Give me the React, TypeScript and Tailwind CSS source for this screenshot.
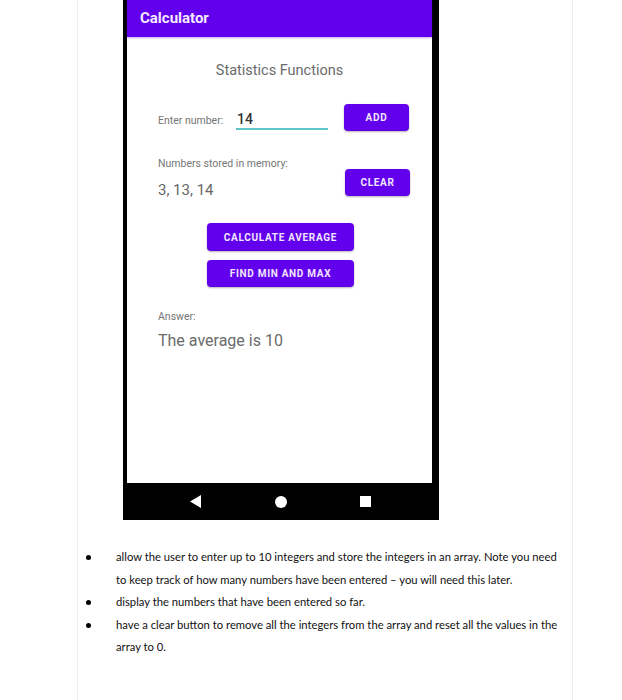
import React from 'react';

const purpleBtn =
  "flex items-center justify-center bg-[#6200ee] text-[#f1e7ff] rounded-[4px] shadow-[0_1px_2px_rgba(0,0,0,0.3)] text-[10px] font-bold tracking-[0.7px] uppercase";

const PhoneScreen: React.FC = () => (
  <div className="flex flex-col w-[305px] h-[483px] bg-white">
    <div className="h-[37px] bg-[#6200ee] flex items-center pl-[13px] shadow-[0_1px_2px_rgba(98,0,238,0.35)]">
      <span className="text-[15px] font-bold text-[#f4ebff] leading-none">Calculator</span>
    </div>

    <div className="mt-[24px] text-center text-[14.5px] leading-[20px] text-[#6b6b6b]">
      Statistics Functions
    </div>

    <div className="mt-[23px] pl-[31px] flex items-start">
      <div className="w-[78px] mt-[10px] text-[10.5px] leading-[14px] text-[#757575]">Enter number:</div>
      <div className="w-[92px] pt-[7px] border-b-2 border-[#5cc6c9]">
        <div className="h-[17px] pl-[1px] text-[14px] leading-[16px] font-medium text-[#333]">14</div>
      </div>
      <button className={`${purpleBtn} ml-[16px] w-[65px] h-[27px]`}>Add</button>
    </div>

    <div className="mt-[26px] pl-[31px] flex items-start">
      <div className="w-[187px]">
        <div className="text-[10.5px] leading-[14px] text-[#757575]">Numbers stored in memory:</div>
        <div className="mt-[9px] text-[15px] leading-[20px] text-[#666]">3, 13, 14</div>
      </div>
      <button className={`${purpleBtn} mt-[12px] w-[65px] h-[27px]`}>Clear</button>
    </div>

    <div className="mt-[23px] flex flex-col items-center gap-[9px] pl-[2px]">
      <button className={`${purpleBtn} w-[147px] h-[28px]`}>Calculate Average</button>
      <button className={`${purpleBtn} w-[147px] h-[27px]`}>Find Min and Max</button>
    </div>

    <div className="mt-[23px] pl-[31px]">
      <div className="text-[10.5px] leading-[14px] text-[#757575]">Answer:</div>
      <div className="mt-[6px] text-[16px] leading-[22px] text-[#6b6b6b]">The average is 10</div>
    </div>
  </div>
);

const NavBar: React.FC = () => (
  <div className="h-[37px] flex items-center pl-[30px]">
    <div className="w-[85px] flex justify-center">
      <svg width="11" height="13" viewBox="0 0 11 13">
        <polygon points="11,0 11,13 0,6.5" fill="#fff" />
      </svg>
    </div>
    <div className="w-[85px] flex justify-center">
      <div className="w-[12px] h-[12px] rounded-full bg-white" />
    </div>
    <div className="w-[85px] flex justify-center">
      <div className="w-[11px] h-[11px] bg-white" />
    </div>
  </div>
);

const bullets: string[][] = [
  [
    'allow the user to enter up to 10 integers and store the integers in an array. Note you need',
    'to keep track of how many numbers have been entered \u2013 you will need this later.',
  ],
  ['display the numbers that have been entered so far.'],
  [
    'have a clear button to remove all the integers from the array and reset all the values in the',
    'array to 0.',
  ],
];

export default function App() {
  return (
    <div className="w-[622px] h-[700px] bg-white overflow-hidden" style={{ fontFamily: 'Roboto, "Liberation Sans", sans-serif' }}>
      <div className="ml-[77px] w-[496px] h-[700px] border-x border-[#efefef]">
        <div className="ml-[45px] w-[316px] bg-black flex flex-col">
          <div className="pl-[4px] pr-[7px]">
            <PhoneScreen />
          </div>
          <NavBar />
        </div>

        <ul className="mt-[26px] text-[11.25px] leading-[22.5px] text-[#111]" style={{ fontFamily: 'Lato, "Open Sans", sans-serif' }}>
          {bullets.map((lines, i) => (
            <li key={i} className="flex">
              <div className="w-[38px] shrink-0 flex justify-start pl-[8px] pt-[9px]">
                <div className="w-[5px] h-[5px] rounded-full bg-black" />
              </div>
              <div>
                {lines.map((l, j) => (
                  <div key={j} className="whitespace-nowrap">{l}</div>
                ))}
              </div>
            </li>
          ))}
        </ul>
      </div>
    </div>
  );
}
